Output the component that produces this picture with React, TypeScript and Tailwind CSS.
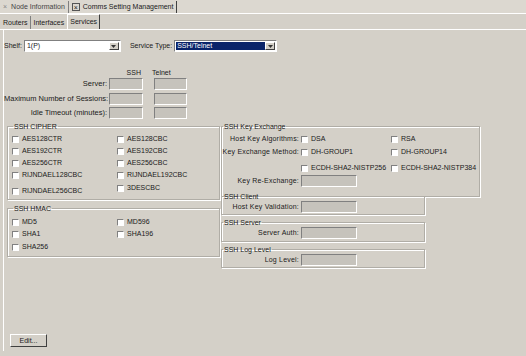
import React from "react";

const sunken = "border border-t-[#808080] border-l-[#808080] border-b-white border-r-white";

function Check({ label }: { label: string }) {
  return (
    <div className="flex items-center h-[12px] gap-[3px] whitespace-nowrap">
      <span className={`w-[7px] h-[7px] bg-white ${sunken} shrink-0`} />
      <span>{label}</span>
    </div>
  );
}

function Field({ w = "w-[56px]" }: { w?: string }) {
  return <span className={`${w} h-[12px] bg-[#c6c3bc] ${sunken} shrink-0`} />;
}

function Group({ title, className = "", children }: { title: string; className?: string; children?: React.ReactNode }) {
  return (
    <fieldset className={`border border-[#b0ada6] shadow-[inset_1px_1px_0_white,1px_1px_0_white] ${className}`}>
      <legend className="ml-[1px] px-[1px] leading-[9px]">{title}</legend>
      {children}
    </fieldset>
  );
}

function Combo({ value, w, selected = false }: { value: string; w: string; selected?: boolean }) {
  return (
    <div className={`${w} h-[12px] flex bg-white ${sunken} p-[1px]`}>
      <span className={`flex-1 px-[1px] leading-[8px] ${selected ? "bg-[#0a246a] text-white" : ""}`}>{value}</span>
      <span className="w-[10px] h-full bg-[#d4d0c8] border border-t-white border-l-white border-b-[#404040] border-r-[#404040] flex items-center justify-center">
        <svg width="5" height="3" viewBox="0 0 5 3"><path d="M0 0h5L2.5 3z" fill="#333" /></svg>
      </span>
    </div>
  );
}

function LabelField({ label }: { label: string }) {
  return (
    <div className="flex items-center gap-[2px]">
      <span className="w-[77px] text-right whitespace-nowrap tracking-[0.2px]">{label}</span>
      <Field />
    </div>
  );
}

export default function App() {
  return (
    <div className="w-[526px] h-[356px] bg-[#d4d0c8] text-[#1a1a1a] text-[7px] leading-[10px] overflow-hidden flex flex-col" style={{ fontFamily: '"Liberation Sans", Arial, sans-serif' }}>
      {/* window tabs */}
      <div className="h-[14px] flex items-end px-[3px] border-b border-white bg-[#dcd8d0]">
        <div className="flex items-center gap-[4px] pr-[3px] h-[12px] border-r border-[#808080] text-[#444]">
          <span className="text-[#888]">×</span>
          <span>Node Information</span>
        </div>
        <div className="flex items-center gap-[3px] pl-[3px] pr-[3px] h-[12px] border-r border-[#404040]">
          <span className="w-[8px] h-[8px] border border-[#555] flex items-center justify-center text-[7px] leading-none">×</span>
          <span>Comms Setting Management</span>
        </div>
      </div>
      {/* sub tabs */}
      <div className="h-[16px] flex items-end px-[3px] border-b border-white">
        <div className="h-[13px] flex items-center pr-[2px] border-r border-[#808080]">Routers</div>
        <div className="h-[13px] flex items-center px-[3px]">Interfaces</div>
        <div className="h-[15px] flex items-center px-[2px] border-t border-l border-white border-r border-r-[#404040]">Services</div>
      </div>

      <div className="flex-1 flex flex-col border-l border-white ml-[3px] mb-[5px] pr-[4px]">
        {/* shelf row */}
        <div className="flex items-center mt-[10px] h-[12px]">
          <span className="mr-[2px]">Shelf:</span>
          <Combo value="1(P)" w="w-[97px]" />
          <span className="ml-[9px] mr-[2px]">Service Type:</span>
          <Combo value="SSH/Telnet" w="w-[103px]" selected />
        </div>

        {/* server settings */}
        <div className="mt-[17px] flex h-[8px] leading-[8px]">
          <span className="w-[137px] text-right">SSH</span>
          <span className="ml-[11px]">Telnet</span>
        </div>
        <div className="mt-[1px] grid grid-cols-[103px_34px_44px] gap-x-[2px] gap-y-[2.5px] items-center">
          {["Server:", "Maximum Number of Sessions:", "Idle Timeout (minutes):"].map((l) => (
            <React.Fragment key={l}>
              <span className="text-right whitespace-nowrap text-[7.5px]">{l}</span>
              <Field w="w-[34px]" />
              <span className="pl-[9px] flex"><Field w="w-[33px]" /></span>
            </React.Fragment>
          ))}
        </div>

        <div className="flex gap-[1px] mt-[3px]">
          {/* left column */}
          <div className="w-[213px] ml-[3px] flex flex-col gap-[4px]">
            <Group title="SSH CIPHER" className="h-[78px] pl-[4px] pt-[2px]">
              <div className="grid grid-cols-[105px_1fr]">
                <Check label="AES128CTR" />
                <Check label="AES128CBC" />
                <Check label="AES192CTR" />
                <Check label="AES192CBC" />
                <Check label="AES256CTR" />
                <Check label="AES256CBC" />
                <Check label="RIJNDAEL128CBC" />
                <Check label="RIJNDAEL192CBC" />
                <div className="mt-[4px]"><Check label="RIJNDAEL256CBC" /></div>
                <div className="mt-[1px]"><Check label="3DESCBC" /></div>
              </div>
            </Group>
            <Group title="SSH HMAC" className="h-[53px] pl-[4px] pt-[3px]">
              <div className="grid grid-cols-[105px_1fr]">
                <Check label="MD5" />
                <Check label="MD596" />
                <Check label="SHA1" />
                <Check label="SHA196" />
                <div className="mt-[1px]"><Check label="SHA256" /></div>
              </div>
            </Group>
          </div>

          {/* right column */}
          <div className="w-[260px] flex flex-col">
            <Group title="SSH Key Exchange" className="w-[259px] h-[75px] pt-[2px]">
              <div className="grid grid-cols-[77px_88px_1fr] gap-x-[2px] items-center">
                <span className="text-right whitespace-nowrap tracking-[0.2px]">Host Key Algorithms:</span>
                <Check label="DSA" />
                <Check label="RSA" />
                <span className="text-right whitespace-nowrap mt-[1px] tracking-[0.2px]">Key Exchange Method:</span>
                <div className="mt-[1px]"><Check label="DH-GROUP1" /></div>
                <div className="mt-[1px]"><Check label="DH-GROUP14" /></div>
                <span />
                <div className="mt-[4px]"><Check label="ECDH-SHA2-NISTP256" /></div>
                <div className="mt-[4px]"><Check label="ECDH-SHA2-NISTP384" /></div>
                <span className="text-right whitespace-nowrap mt-[1px] tracking-[0.2px]">Key Re-Exchange:</span>
                <div className="mt-[1px] flex"><Field /></div>
              </div>
            </Group>
            <Group title="SSH Client" className="w-[204px] h-[23px] -mt-[5px]">
              <LabelField label="Host Key Validation:" />
            </Group>
            <Group title="SSH Server" className="w-[204px] h-[24px] mt-[3px]">
              <LabelField label="Server Auth:" />
            </Group>
            <Group title="SSH Log Level" className="w-[204px] h-[23px] mt-[3px]">
              <LabelField label="Log Level:" />
            </Group>
          </div>
        </div>

        <div className="mt-auto ml-[6px] mb-[4px]">
          <button className="w-[37px] h-[13px] bg-[#d4d0c8] border border-t-white border-l-white border-b-[#404040] border-r-[#404040] text-[7px] leading-[9px]">Edit...</button>
        </div>
      </div>
    </div>
  );
}
